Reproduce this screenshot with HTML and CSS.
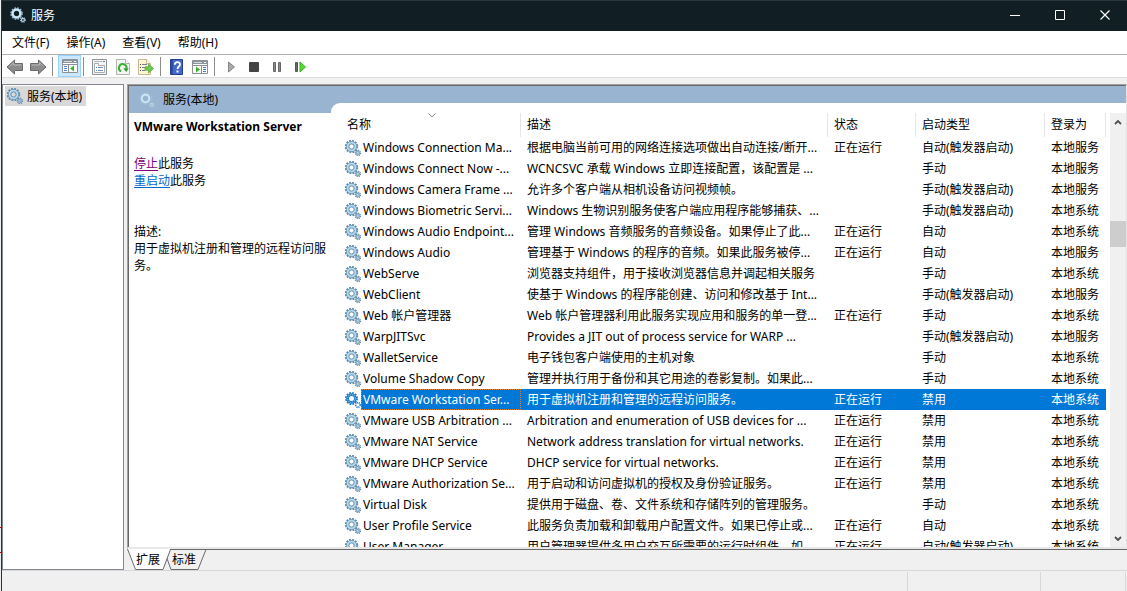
FILE: index.html
```html
<!DOCTYPE html>
<html lang="zh-CN">
<head>
<meta charset="utf-8">
<title>服务</title>
<link rel="stylesheet" href="styles.css">
</head>
<body>
<svg class="defs" aria-hidden="true">
  <symbol id="gear" viewBox="0 0 16 16">
    <circle cx="6.5" cy="6.5" r="5.7" fill="none" stroke="#5f8aa8" stroke-width="2" stroke-dasharray="1.8 1.18"/>
    <circle cx="6.5" cy="6.5" r="4" fill="none" stroke="#6b93b0" stroke-width="3"/>
    <circle cx="6.5" cy="6.5" r="3.9" fill="none" stroke="#b4d8ee" stroke-width="1.900"/>
    <circle cx="6.5" cy="6.5" r="2.4" fill="none" stroke="#6f9aba" stroke-width="0.8"/>
    <circle cx="12.9" cy="12.9" r="2.600" fill="none" stroke="#5f87a3" stroke-width="1.4" stroke-dasharray="1.1 0.94"/>
    <circle cx="12.9" cy="12.9" r="1.5" fill="none" stroke="#86abc5" stroke-width="1.6"/>
  </symbol>
  <symbol id="gear-light" viewBox="0 0 16 16">
    <circle cx="6.5" cy="6.5" r="5.5" fill="none" stroke="#9cc0d8" stroke-width="1.6" stroke-dasharray="1.7 1.18"/>
    <circle cx="6.5" cy="6.5" r="4" fill="none" stroke="#9cc0d8" stroke-width="2.6"/>
    <circle cx="6.5" cy="6.5" r="3.8" fill="none" stroke="#d3e8f4" stroke-width="1.7"/>
    <circle cx="12.9" cy="12.9" r="2.4" fill="none" stroke="#9dbdd2" stroke-width="1.2" stroke-dasharray="1 0.88"/>
    <circle cx="12.9" cy="12.9" r="1.5" fill="none" stroke="#b9d3e3" stroke-width="1.3"/>
  </symbol>
  <symbol id="gear-selected" viewBox="0 0 16 16">
    <circle cx="6.5" cy="6.5" r="5.6" fill="none" stroke="#2477bd" stroke-width="1.8" stroke-dasharray="1.7 1.23"/>
    <circle cx="6.5" cy="6.5" r="3.9" fill="none" stroke="#1f7bcb" stroke-width="2.8"/>
    <circle cx="6.5" cy="6.5" r="3.8" fill="none" stroke="#6cb2e8" stroke-width="1.4" stroke-dasharray="1 1"/>
    <circle cx="12.9" cy="12.9" r="2.2" fill="none" stroke="#2b7fc4" stroke-width="1.8" stroke-dasharray="1 0.7"/>
  </symbol>
  <symbol id="arrow-left" viewBox="0 0 18 16">
    <path d="M1 8 8.500 1V4.500H16.500V11.500H8.500V15Z" fill="#8c8c8c" stroke="#6a6a6a" stroke-width="1"/>
    <path d="M3.500 7.500 7.500 3.800V6H15.500" fill="none" stroke="#b8b8b8"/>
  </symbol>
</svg>

<div class="window">
  <header class="titlebar">
    <svg class="icon"><use href="#gear-light"/></svg>
    <h1 class="title">服务</h1>
    <div class="controls">
      <button class="control" aria-label="最小化"><svg width="10" height="10"><path d="M0 5.500H10" stroke="#fff"/></svg></button>
      <button class="control" aria-label="最大化"><svg width="10" height="10"><path d="M.5.5H9.500V9.500H.5Z" fill="none" stroke="#fff"/></svg></button>
      <button class="control" aria-label="关闭"><svg width="10" height="10"><path d="M.5.5 9.500 9.500M9.500.5.5 9.500" stroke="#fff" stroke-width="1.2"/></svg></button>
    </div>
  </header>

  <nav class="menubar">
    <button class="menu">文件(F)</button>
    <button class="menu">操作(A)</button>
    <button class="menu">查看(V)</button>
    <button class="menu">帮助(H)</button>
  </nav>

  <div class="toolbar" role="toolbar">
    <button class="tool" aria-label="后退"><svg width="18" height="16"><use href="#arrow-left"/></svg></button>
    <button class="tool" aria-label="前进"><svg class="flip" width="18" height="16"><use href="#arrow-left"/></svg></button>
    <span class="divider"></span>
    <button class="tool tool-on" aria-label="显示/隐藏控制台树">
      <svg width="16" height="14"><path d="M.5.5H15.500V13.500H.5Z" fill="#fff" stroke="#8a9096"/><path d="M1 1H15V4H1Z" fill="#8e969d"/><path d="M2 2.500H10" stroke="#d5dade"/><path d="M12 2.500H14" stroke="#fff"/><path d="M0 5.500H16M6.500 5V14" stroke="#8a9096"/><path d="M2 7.500H5M2 9.500H5M2 11.500H5" stroke="#4c7fc4"/><path d="M12 6.500V12.500L8 9.500Z" fill="#36b51f"/></svg>
    </button>
    <span class="divider"></span>
    <button class="tool" aria-label="属性">
      <svg width="16" height="16"><path d="M.5.5H14.500V15.500H.5Z" fill="#f4f5f6" stroke="#8b9298"/><path d="M2 2.500H10" stroke="#b3b8bc"/><path d="M11 2.500H13" stroke="#777"/><path d="M2.500 4.500H6.500V6.500H12.500V13.500H2.500Z" fill="#fff" stroke="#a5abb0"/><path d="M4 8.500H5M4 11.500H5" stroke="#3e87d0"/><path d="M6 8.500H11M6 11.500H11" stroke="#8094a8"/></svg>
    </button>
    <button class="tool" aria-label="刷新">
      <svg width="14" height="16"><path d="M.5.5H9.500L13.500 4.500V15.500H.5Z" fill="#f5f5f3" stroke="#b3b3b0"/><path d="M9.500.5V4.500H13.500" fill="#fff" stroke="#b3b3b0"/><path d="M5 12.300A3.800 3.800 0 1 1 10.500 9.500" fill="none" stroke="#3aae35" stroke-width="2"/><path d="M7.300 9.200H12.700L10.200 13Z" fill="#2f9d2b"/></svg>
    </button>
    <button class="tool" aria-label="导出列表">
      <svg width="16" height="16"><path d="M.5.5H8.500L12.500 4.500V15.500H.5Z" fill="#fdf5d6" stroke="#c2b98f"/><path d="M8.500.5V4.500H12.500" fill="#fff" stroke="#c2b98f"/><path d="M2 5.500H3M2 8.500H3M2 11.500H3" stroke="#444"/><path d="M4 5.500H9M4 8.500H7M4 11.500H7" stroke="#7e7895"/><path d="M7 7.800H10.500V5L15.600 9.500 10.500 14V11.200H7Z" fill="#6cc84a" stroke="#4cab30" stroke-width=".7"/></svg>
    </button>
    <span class="divider"></span>
    <button class="tool" aria-label="帮助">
      <svg width="14" height="16"><path d="M.5.5H12.500V15.500H.5Z" fill="#4568cc" stroke="#243f94"/><path d="M1 1H3V15H1Z" fill="#2c4aa8"/><path d="M4.800 5.800C4.800 2.400 10.200 2.400 10 5.600 9.900 7.600 7.500 7.500 7.500 10" fill="none" stroke="#fff" stroke-width="1.800"/><path d="M6.500 11.500H8.500V13.500H6.500Z" fill="#fff"/></svg>
    </button>
    <button class="tool" aria-label="显示/隐藏操作窗格">
      <svg width="16" height="14"><path d="M.5.5H15.500V13.500H.5Z" fill="#fff" stroke="#8a9096"/><path d="M1 1H15V4H1Z" fill="#8e969d"/><path d="M2 2.500H10" stroke="#d5dade"/><path d="M12 2.500H14" stroke="#fff"/><path d="M0 5.500H16M9.500 5V14" stroke="#8a9096"/><path d="M11 7.500H14M11 9.500H14M11 11.500H14" stroke="#4c7fc4"/><path d="M4 6.500V12.500L8 9.500Z" fill="#36b51f"/></svg>
    </button>
    <span class="divider"></span>
    <button class="tool" aria-label="启动服务"><svg width="8" height="12"><path d="M1.500 1V11L7.500 6Z" fill="#aaa" stroke="#858585"/></svg></button>
    <button class="tool" aria-label="停止服务"><svg width="10" height="10"><rect width="10" height="10" rx="1" fill="#444"/></svg></button>
    <button class="tool" aria-label="暂停服务"><svg width="8" height="10"><path d="M.5.5H2.500V9.500H.5ZM5.500.5H7.500V9.500H5.500Z" fill="#8b8b8b" stroke="#666"/></svg></button>
    <button class="tool" aria-label="重启动服务"><svg width="12" height="12"><path d="M1.500 1.500H3.500V10.500H1.500Z" fill="#666" stroke="#555"/><path d="M6 1V11L11.500 6Z" fill="#5bd838" stroke="#2eae1d"/></svg></button>
  </div>

  <main class="main">
    <aside class="tree">
      <button class="node"><svg class="icon"><use href="#gear"/></svg><span>服务(本地)</span></button>
    </aside>

    <section class="content">
      <div class="pane">
        <div class="side">
          <div class="side-head"><svg class="icon"><use href="#gear-light"/></svg>服务(本地)</div>
          <div class="details">
            <h2 class="service">VMware Workstation Server</h2>
            <p class="actions"><a class="link visited" href="#stop">停止</a>此服务<br><a class="link" href="#restart">重启动</a>此服务</p>
            <p class="about">描述:<br>用于虚拟机注册和管理的远程访问服务。</p>
          </div>
        </div>
        <div class="listing">
          <div class="list">
            <table class="grid">
              <colgroup><col class="c-name"><col><col class="c-state"><col class="c-type"><col class="c-logon"></colgroup>
              <thead>
                <tr><th class="first">名称<svg class="sort" width="8" height="5"><path d="M.5.5 4 4 7.500.5" fill="none" stroke="#888"/></svg></th><th>描述</th><th>状态</th><th>启动类型</th><th>登录为</th></tr>
              </thead>
              <tbody>
                <tr><td class="first"><div class="name"><svg class="icon"><use href="#gear"/></svg><span class="label">Windows Connection Ma...</span></div></td><td>根据电脑当前可用的网络连接选项做出自动连接/断开...</td><td>正在运行</td><td>自动(触发器启动)</td><td>本地服务</td></tr>
                <tr><td class="first"><div class="name"><svg class="icon"><use href="#gear"/></svg><span class="label">Windows Connect Now -...</span></div></td><td>WCNCSVC 承载 Windows 立即连接配置，该配置是 ...</td><td></td><td>手动</td><td>本地服务</td></tr>
                <tr><td class="first"><div class="name"><svg class="icon"><use href="#gear"/></svg><span class="label">Windows Camera Frame ...</span></div></td><td>允许多个客户端从相机设备访问视频帧。</td><td></td><td>手动(触发器启动)</td><td>本地服务</td></tr>
                <tr><td class="first"><div class="name"><svg class="icon"><use href="#gear"/></svg><span class="label">Windows Biometric Servi...</span></div></td><td>Windows 生物识别服务使客户端应用程序能够捕获、...</td><td></td><td>手动(触发器启动)</td><td>本地系统</td></tr>
                <tr><td class="first"><div class="name"><svg class="icon"><use href="#gear"/></svg><span class="label">Windows Audio Endpoint...</span></div></td><td>管理 Windows 音频服务的音频设备。如果停止了此...</td><td>正在运行</td><td>自动</td><td>本地系统</td></tr>
                <tr><td class="first"><div class="name"><svg class="icon"><use href="#gear"/></svg><span class="label">Windows Audio</span></div></td><td>管理基于 Windows 的程序的音频。如果此服务被停...</td><td>正在运行</td><td>自动</td><td>本地服务</td></tr>
                <tr><td class="first"><div class="name"><svg class="icon"><use href="#gear"/></svg><span class="label">WebServe</span></div></td><td>浏览器支持组件，用于接收浏览器信息并调起相关服务</td><td></td><td>手动</td><td>本地系统</td></tr>
                <tr><td class="first"><div class="name"><svg class="icon"><use href="#gear"/></svg><span class="label">WebClient</span></div></td><td>使基于 Windows 的程序能创建、访问和修改基于 Int...</td><td></td><td>手动(触发器启动)</td><td>本地服务</td></tr>
                <tr><td class="first"><div class="name"><svg class="icon"><use href="#gear"/></svg><span class="label">Web 帐户管理器</span></div></td><td>Web 帐户管理器利用此服务实现应用和服务的单一登...</td><td>正在运行</td><td>手动</td><td>本地系统</td></tr>
                <tr><td class="first"><div class="name"><svg class="icon"><use href="#gear"/></svg><span class="label">WarpJITSvc</span></div></td><td>Provides a JIT out of process service for WARP ...</td><td></td><td>手动(触发器启动)</td><td>本地服务</td></tr>
                <tr><td class="first"><div class="name"><svg class="icon"><use href="#gear"/></svg><span class="label">WalletService</span></div></td><td>电子钱包客户端使用的主机对象</td><td></td><td>手动</td><td>本地系统</td></tr>
                <tr><td class="first"><div class="name"><svg class="icon"><use href="#gear"/></svg><span class="label">Volume Shadow Copy</span></div></td><td>管理并执行用于备份和其它用途的卷影复制。如果此...</td><td></td><td>手动</td><td>本地系统</td></tr>
                <tr class="selected"><td class="first"><div class="name"><svg class="icon"><use href="#gear-selected"/></svg><span class="label">VMware Workstation Ser...</span></div></td><td>用于虚拟机注册和管理的远程访问服务。</td><td>正在运行</td><td>禁用</td><td>本地系统</td></tr>
                <tr><td class="first"><div class="name"><svg class="icon"><use href="#gear"/></svg><span class="label">VMware USB Arbitration ...</span></div></td><td>Arbitration and enumeration of USB devices for ...</td><td>正在运行</td><td>禁用</td><td>本地系统</td></tr>
                <tr><td class="first"><div class="name"><svg class="icon"><use href="#gear"/></svg><span class="label">VMware NAT Service</span></div></td><td>Network address translation for virtual networks.</td><td>正在运行</td><td>禁用</td><td>本地系统</td></tr>
                <tr><td class="first"><div class="name"><svg class="icon"><use href="#gear"/></svg><span class="label">VMware DHCP Service</span></div></td><td>DHCP service for virtual networks.</td><td>正在运行</td><td>禁用</td><td>本地系统</td></tr>
                <tr><td class="first"><div class="name"><svg class="icon"><use href="#gear"/></svg><span class="label">VMware Authorization Se...</span></div></td><td>用于启动和访问虚拟机的授权及身份验证服务。</td><td>正在运行</td><td>禁用</td><td>本地系统</td></tr>
                <tr><td class="first"><div class="name"><svg class="icon"><use href="#gear"/></svg><span class="label">Virtual Disk</span></div></td><td>提供用于磁盘、卷、文件系统和存储阵列的管理服务。</td><td></td><td>手动</td><td>本地系统</td></tr>
                <tr><td class="first"><div class="name"><svg class="icon"><use href="#gear"/></svg><span class="label">User Profile Service</span></div></td><td>此服务负责加载和卸载用户配置文件。如果已停止或...</td><td>正在运行</td><td>自动</td><td>本地系统</td></tr>
                <tr><td class="first"><div class="name"><svg class="icon"><use href="#gear"/></svg><span class="label">User Manager</span></div></td><td>用户管理器提供多用户交互所需要的运行时组件。如...</td><td>正在运行</td><td>自动(触发器启动)</td><td>本地系统</td></tr>
              </tbody>
            </table>
          </div>
          <div class="scrollbar">
            <button class="scroll-btn" aria-label="向上滚动"><svg width="8" height="6"><path d="M1 5 4 2 7 5" fill="none" stroke="#505050" stroke-width="1.800"/></svg></button>
            <div class="track"><div class="before"></div><div class="thumb"></div><div class="after"></div></div>
            <button class="scroll-btn" aria-label="向下滚动"><svg width="8" height="6"><path d="M1 1 4 4 7 1" fill="none" stroke="#505050" stroke-width="1.800"/></svg></button>
          </div>
        </div>
      </div>
      <div class="tabs">
        <svg class="tab-shapes" width="80" height="21" aria-hidden="true">
          <path d="M0 0H43L36 20.500H8Z" fill="#fff"/>
          <path d="M43.500.5 40 9.500 44 20.500H71L79 .5Z" fill="#f0f0f0"/>
          <path d="M.5 0 8.500 20.500H36L43.500.5H80M40 9.500 44 20.500H71L79 .5" fill="none" stroke="#696969"/>
        </svg>
        <button class="tab">扩展</button>
        <button class="tab">标准</button>
      </div>
    </section>
  </main>

  <footer class="statusbar"><span class="status-main"></span><span class="status-mid"></span><span class="status-end"></span></footer>
</div>
</body>
</html>
```
FILE: styles.css
```css
* { box-sizing: border-box; }

body {
  margin: 0;
  padding-left: 1px;
  background: linear-gradient(#c00, #c00) 0 527px / 1px 1px no-repeat,
              linear-gradient(#c00, #c00) 0 552px / 1px 1px no-repeat, #eceff1;
  color: #000;
  font: 12px/17px "Noto Sans", "Noto Sans CJK SC", sans-serif;
}

button {
  margin: 0;
  padding: 0;
  border: 0;
  background: none;
  color: inherit;
  font: inherit;
}

svg { display: block; flex: none; }
.defs { position: absolute; width: 0; height: 0; }
.icon { width: 16px; height: 16px; }

.window {
  display: flex;
  flex-direction: column;
  height: 100vh;
  border-left: 1px solid #26343a;
  background: #f0f0f0;
  overflow: hidden;
}

.titlebar {
  display: flex;
  flex: none;
  align-items: center;
  height: 31px;
  padding: 0 0 2px 8px;
  gap: 5px;
  border-top: 1px solid #2a363b;
  background: #111e23;
  color: #fff;
}
.title { margin: 0; font-size: 12px; font-weight: 400; }
.controls { display: flex; align-self: stretch; margin-left: auto; }
.control { display: flex; align-items: center; justify-content: center; width: 45px; }

.menubar {
  display: flex;
  flex: none;
  height: 24px;
  padding-left: 10px;
  gap: 17px;
  border-bottom: 1px solid #b0b0b0;
  background: #fff;
}

.toolbar {
  display: flex;
  flex: none;
  height: 23px;
  padding-left: 2px;
  border-bottom: 1px solid #dcdcdc;
  background: #fff;
}
.tool { display: flex; align-items: center; justify-content: center; width: 23px; padding: 2px 1px 0 0; }
.tool-on { padding: 0; border: 1px solid #99d1ff; background: #cce8ff; }
.flip { transform: scaleX(-1); }
.divider { width: 1px; margin: 2px 5px 1px 2px; background: #8c8c8c; }

.main { display: flex; flex: 1; min-height: 0; padding-top: 6px; gap: 3px; }

.tree { width: 122px; flex: none; border: 1px solid #828790; background: #fff; }
.node {
  display: flex;
  align-items: center;
  height: 20px;
  margin: 1px 0 0 2px;
  padding: 0 4px 0 2px;
  gap: 4px;
  background: #d9d9d9;
}

.content { display: flex; flex: 1; flex-direction: column; min-width: 0; }
.pane {
  display: flex;
  flex: 1;
  min-height: 0;
  border: 1px solid #a0a0a0;
  border-right-color: #e3e3e3;
  border-bottom: 2px solid #e8e8e8;
  box-shadow: inset 1px 1px #696969;
  padding: 1px 0 0 1px;
  background: #99b4d1;
}
.side { display: flex; flex: none; flex-direction: column; width: 202px; }
.side-head { display: flex; flex: none; align-items: center; height: 27px; padding-left: 10px; gap: 8px; }
.details { flex: 1; padding: 5px; background: #fff; }
.service { margin: 0 0 20px; font-size: 12px; line-height: 17px; font-weight: 700; }
.actions { margin: 0 0 34px; }
.about { margin: 0; }
.link { color: #0066cc; text-underline-offset: 2px; }
.visited { color: #800080; }

.listing {
  display: flex;
  flex: 1;
  min-width: 0;
  margin-top: 17px;
  padding-top: 10px;
  gap: 4px;
  border-top-left-radius: 9px;
  background: #fff;
}
.list { flex: 1; min-width: 0; overflow: hidden; }
.grid { width: 100%; border-collapse: separate; border-spacing: 0; table-layout: fixed; }
.c-name { width: 190px; }
.c-state { width: 88px; }
.c-type { width: 129px; }
.c-logon { width: 61px; }
.grid th {
  position: relative;
  height: 24px;
  padding: 0 0 2px 6px;
  border-right: 1px solid #e5e5e5;
  font-weight: 400;
  text-align: left;
}
.grid th.first { padding-left: 16px; }
.sort { position: absolute; top: 0; left: 97px; }
.grid td { height: 21px; padding: 0 0 0 6px; line-height: 20px; white-space: nowrap; }
.grid td.first { padding: 0 0 0 14px; }
.name { display: flex; align-items: center; height: 21px; }
.label { flex: 1; padding-left: 2px; line-height: 21px; }
.selected { color: #fff; }
.selected td:not(.first), .selected .label { background: #0078d7; }
.selected .label { outline: 1px dotted #d98235; outline-offset: -1px; }

.scrollbar { display: flex; flex: none; flex-direction: column; width: 16px; background: #f0f0f0; }
.scroll-btn { display: flex; flex: none; align-items: center; justify-content: center; height: 17px; }
.track { display: flex; flex: 1; flex-direction: column; }
.before { flex: 91; }
.thumb { flex: 26; background: #cdcdcd; }
.after { flex: 283; }

.tabs { position: relative; display: flex; flex: none; height: 21px; padding: 0 0 0 9px; gap: 12px; border-top: 1px solid #696969; }
.tab { position: relative; height: 19px; }
.tab-shapes { position: absolute; top: -1px; left: 0; }

.statusbar { display: flex; flex: none; height: 21px; padding-top: 1px; border-top: 1px solid #d7d7d7; }
.status-main { flex: 1; border-right: 1px solid #d7d7d7; }
.status-mid { width: 133px; border-right: 1px solid #d7d7d7; }
.status-end { width: 85px; margin-right: 1px; border-right: 1px solid #d7d7d7; }
```
